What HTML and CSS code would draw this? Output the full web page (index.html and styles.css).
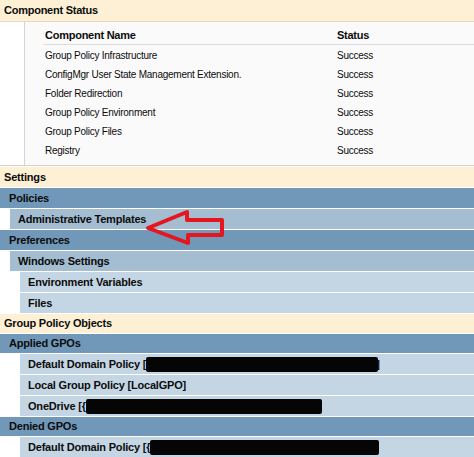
FILE: index.html
```html
<!DOCTYPE html>
<html>
<head>
<meta charset="utf-8">
<link rel="stylesheet" href="styles.css">
</head>
<body>
<div class="page">
  <div class="sec-head">Component Status</div>
  <div class="cs-body">
    <div class="cs-gutter"></div>
    <div class="cs-table">
      <div class="cs-row cs-headrow"><span class="c1">Component Name</span><span class="c2">Status</span></div>
      <div class="cs-row"><span class="c1">Group Policy Infrastructure</span><span class="c2">Success</span></div>
      <div class="cs-row"><span class="c1">ConfigMgr User State Management Extension.</span><span class="c2">Success</span></div>
      <div class="cs-row"><span class="c1">Folder Redirection</span><span class="c2">Success</span></div>
      <div class="cs-row"><span class="c1">Group Policy Environment</span><span class="c2">Success</span></div>
      <div class="cs-row"><span class="c1">Group Policy Files</span><span class="c2">Success</span></div>
      <div class="cs-row"><span class="c1">Registry</span><span class="c2">Success</span></div>
    </div>
  </div>

  <div class="group g-settings">
    <div class="sec-head bar">Settings</div>
    <div class="bar lvl1">Policies</div>
    <div class="bar lvl2">Administrative Templates</div>
    <div class="bar lvl1">Preferences</div>
    <div class="bar lvl2">Windows Settings</div>
    <div class="bar lvl3">Environment Variables</div>
    <div class="bar lvl3">Files</div>
  </div>

  <div class="group g-gpo">
    <div class="sec-head bar">Group Policy Objects</div>
    <div class="bar lvl1">Applied GPOs</div>
    <div class="bar lvl3">Default Domain Policy [<span class="redact r1"></span><span class="tail">]</span></div>
    <div class="bar lvl3">Local Group Policy [LocalGPO]</div>
    <div class="bar lvl3">OneDrive [{<span class="redact r2"></span></div>
    <div class="bar lvl1">Denied GPOs</div>
    <div class="bar lvl3">Default Domain Policy [{<span class="redact r3"></span></div>
  </div>

  <svg class="arrow" width="90" height="46" viewBox="0 0 90 46">
    <path d="M8 23 L47 7 L47 15 L82 15 L82 30 L48 30 L48 38 Z" fill="none" stroke="#e4161f" stroke-width="4" stroke-linejoin="round"/>
  </svg>
</div>
</body>
</html>
```

FILE: styles.css
```css
html, body {
  margin: 0;
  padding: 0;
  background: #ffffff;
}
.page {
  position: relative;
  width: 474px;
  height: 457px;
  overflow: hidden;
  font-family: "Liberation Sans", Arial, sans-serif;
  color: #0c0c0c;
}
.sec-head {
  height: 21px;
  line-height: 21px;
  background: #fdf0d4;
  border-bottom: 1px solid #e6d9bd;
  box-sizing: border-box;
  padding-left: 4px;
  font-weight: bold;
  font-size: 11px;
  letter-spacing: -0.25px;
}
.page > .sec-head {
  height: 22px;
  line-height: 21px;
}
.cs-body {
  display: flex;
  height: 144px;
  border-bottom: 1px solid #d9d2c4;
  box-sizing: border-box;
  background: #fafafa;
}
.cs-gutter {
  width: 24px;
  background: #ffffff;
  border-right: 1px solid #d4d4d4;
}
.cs-table {
  flex: 1;
  padding-top: 5px;
  padding-left: 18px;
}
.cs-row {
  display: flex;
  height: 19px;
  line-height: 19px;
  font-size: 10px;
  letter-spacing: -0.25px;
  padding-left: 2px;
}
.cs-headrow {
  height: 17px;
  line-height: 17px;
  font-weight: bold;
  font-size: 11px;
  letter-spacing: -0.25px;
  border-bottom: 1px solid #dcdcdc;
  margin-bottom: 1px;
}
.c1 {
  width: 292px;
  flex: none;
  white-space: nowrap;
}
.c2 {
  white-space: nowrap;
}
.group {
  display: flex;
  flex-direction: column;
}
.g-settings {
  padding-top: 1px;
  gap: 1px;
}
.g-settings .bar {
  height: 20px;
  line-height: 20px;
}
.g-gpo {
  padding-top: 1px;
  gap: 1px;
}
.g-gpo .bar {
  height: 19px;
  line-height: 19px;
}
.g-gpo .lvl3 {
  height: 20px;
  line-height: 20px;
}
.bar {
  box-sizing: border-box;
  font-weight: bold;
  font-size: 11px;
  letter-spacing: -0.2px;
  white-space: nowrap;
}
.g-settings .sec-head, .g-gpo .sec-head {
  border-bottom: none;
}
.lvl1 {
  background: #7198b8;
  padding-left: 9px;
}
.lvl2 {
  background: #a4bdd1;
  margin-left: 10px;
  padding-left: 8px;
}
.lvl3 {
  background: #c4d6e4;
  margin-left: 20px;
  padding-left: 8px;
}
.redact {
  display: inline-block;
  background: #050505;
  height: 15px;
  vertical-align: middle;
  border-radius: 2px;
  margin-top: -2px;
}
.r1 { width: 232px; }
.r2 { width: 236px; }
.r3 { width: 229px; }
.tail {
  margin-left: -2px;
}
.arrow {
  position: absolute;
  left: 140px;
  top: 205px;
}
```
